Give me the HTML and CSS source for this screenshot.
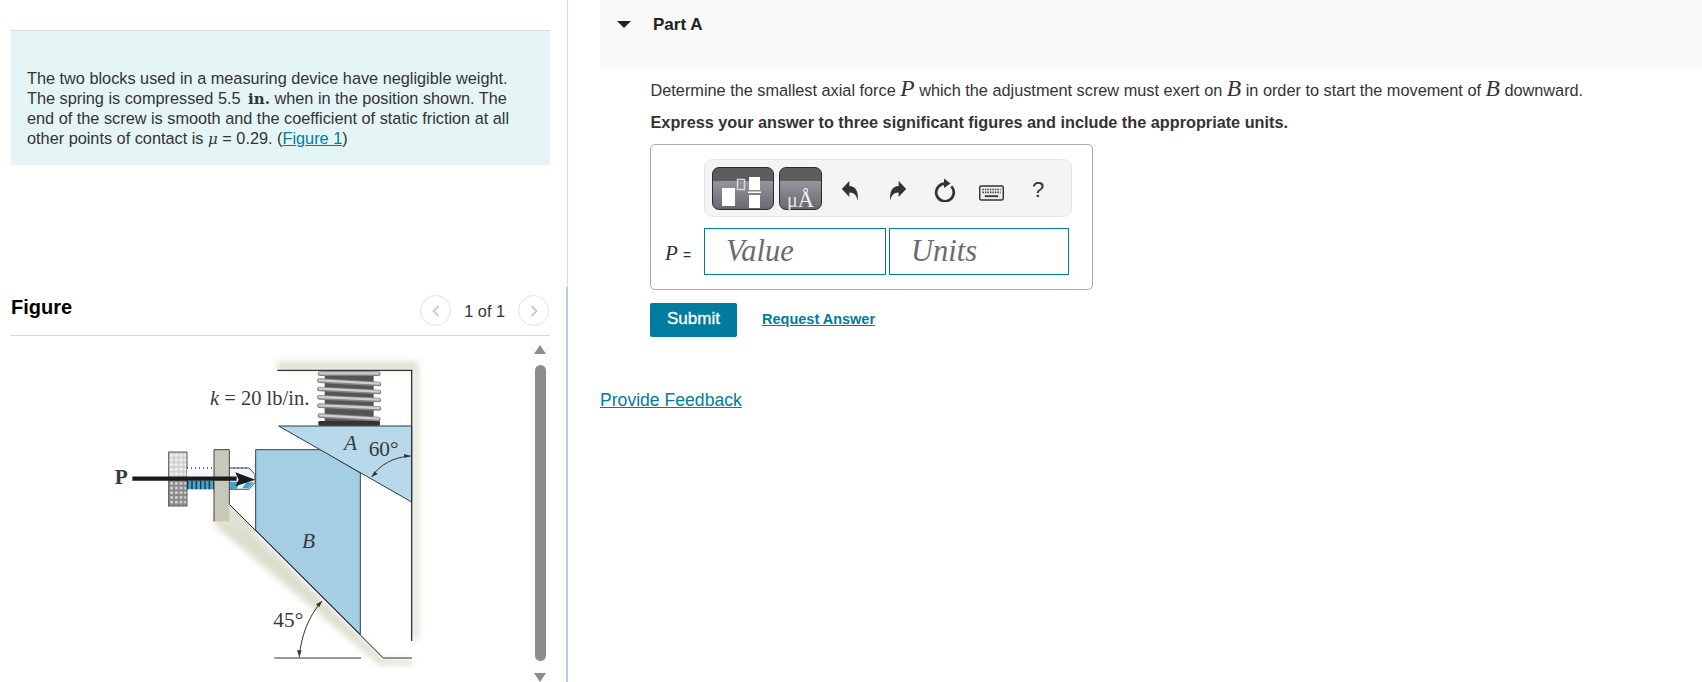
FILE: index.html
```html
<!DOCTYPE html>
<html lang="en">
<head>
<meta charset="utf-8">
<title>Part A</title>
<link rel="stylesheet" href="styles.css">
</head>
<body>
<div class="page">
  <aside class="left">
    <section class="intro">
      <p>The two blocks used in a measuring device have negligible weight. The spring is compressed 5.5 <b class="math-b">in.</b> when in the position shown. The end of the screw is smooth and the coefficient of static friction at all other points of contact is <i class="math">μ</i> = 0.29. (<a href="#">Figure 1</a>)</p>
    </section>
    <header class="fig-head">
      <h2>Figure</h2>
      <div class="pager">
        <span class="circle"><svg viewBox="0 0 12 16" width="10" height="14"><path d="M9 2 L3 8 L9 14" fill="none" stroke="#c4c4c4" stroke-width="2"/></svg></span>
        <span class="count">1 of 1</span>
        <span class="circle"><svg viewBox="0 0 12 16" width="10" height="14"><path d="M3 2 L9 8 L3 14" fill="none" stroke="#c4c4c4" stroke-width="2"/></svg></span>
      </div>
    </header>
    <div class="fig-body">
      <svg class="diagram" viewBox="0 0 1440 1026" width="480" height="342">
        <defs>
          <filter id="soft" x="-20%" y="-20%" width="140%" height="140%"><feGaussianBlur stdDeviation="9"/></filter>
          <pattern id="knurl" width="14" height="14" patternUnits="userSpaceOnUse"><rect width="14" height="14" fill="#d0d0d0"/><circle cx="7" cy="7" r="5" fill="#f0f0f0"/></pattern>
          <pattern id="knurl2" width="14" height="14" patternUnits="userSpaceOnUse"><rect width="14" height="14" fill="#8a8a8a"/><circle cx="7" cy="7" r="4.5" fill="#d8d8d8"/></pattern>
        </defs>
        <g filter="url(#soft)" fill="#dedecf">
          <path d="M562 62 H985 V895 H968 V88 H562 Z"/>
          <path d="M372 530 L420 500 L880 955 H965 V972 H870 L372 552 Z"/>
        </g>
        <path d="M372 500 L418 490 L497 567 V575 L372 541 Z" fill="#e2e1d6"/>
        <path d="M418 490 L880 951" fill="none" stroke="#222" stroke-width="3"/>
        <path d="M497 326 H693 L811 396 V880 L497 567 Z" fill="#a3cee4" stroke="#33434d" stroke-width="3"/>
        <path d="M566 255 H965 V483 Z" fill="#b7d9ea" stroke="#2d3a42" stroke-width="3"/>
        <path d="M562 88 H965 V900" fill="none" stroke="#333" stroke-width="4"/>
        <path d="M880 951 H966 M553 951 H813" stroke="#333" stroke-width="3" fill="none"/>
        <g class="spring">
          <rect x="704" y="92" width="147" height="160" fill="#555"/>
          <rect x="685" y="240" width="185" height="14" rx="4" fill="#333"/>
          <path d="M690 98 H865 M688 119 L867 129 M688 144 L867 153 M688 169 L867 177 M688 194 L867 202 M690 224 L865 234" stroke="#858585" stroke-width="14" stroke-linecap="round" fill="none"/>
          <path d="M690 97 H865 M688 118 L867 128 M688 143 L867 152 M688 168 L867 176 M688 193 L867 201 M690 223 L865 233" stroke="#cfcfcf" stroke-width="7" stroke-linecap="round" fill="none"/>
        </g>
        <text class="fig-text label" x="360" y="192"><tspan font-style="italic">k</tspan> = 20 lb/in.</text>
        <text class="fig-text it" x="762" y="326">A</text>
        <text class="fig-text" x="836" y="345">60°</text>
        <text class="fig-text it" x="636" y="622">B</text>
        <text class="fig-text" x="550" y="858">45°</text>
        <text class="fig-text bold" x="74" y="430">P</text>
        <path d="M845 408 C868 372 910 348 962 345" fill="none" stroke="#333" stroke-width="3"/>
        <path d="M962 345 L942 339 L943 351 Z M845 408 L863 399 L853 391 Z" fill="#333"/>
        <path d="M628 948 C632 890 655 825 696 780" fill="none" stroke="#333" stroke-width="3"/>
        <path d="M628 948 L621 928 L635 928 Z M696 780 L678 790 L688 799 Z" fill="#333"/>
        <rect x="236" y="333" width="55" height="81" fill="url(#knurl)"/>
        <rect x="236" y="414" width="55" height="81" fill="url(#knurl2)"/>
        <rect x="236" y="333" width="55" height="162" fill="none" stroke="#555" stroke-width="3"/>
        <rect x="291" y="381" width="81" height="32" fill="#f4f8fa"/>
        <rect x="291" y="419" width="81" height="26" fill="#3fa7cf"/>
        <path d="M291 381 H372" stroke="#333" stroke-width="5" stroke-dasharray="3 9"/>
        <path d="M291 432 H372" stroke="#22323a" stroke-width="26" stroke-dasharray="4 9"/>
        <path d="M418 381 H477 L495 400 V425 L477 445 H418" fill="#eef5f8" stroke="#555" stroke-width="3"/>
        <path d="M418 381 H470" stroke="#333" stroke-width="5" stroke-dasharray="3 9"/>
        <path d="M418 422 H450 L440 444 H418 Z M470 424 H492 L476 442 H456 Z" fill="#3fa7cf"/>
        <rect x="372" y="326" width="46" height="215" fill="#c9c8b8"/>
        <path d="M372 541 V326 H418 V490" fill="none" stroke="#444" stroke-width="3"/>
        <path d="M127 413 H440" stroke="#1a1a1a" stroke-width="13"/>
        <path d="M436 394 L496 416 L436 436 L446 416 Z" fill="#1a1a1a"/>
      </svg>
      <div class="scroll">
        <span class="arrow up"></span>
        <span class="thumb"></span>
        <span class="arrow down"></span>
      </div>
    </div>
  </aside>
  <main class="right">
    <header class="part-head">
      <span class="caret"></span>
      <h3>Part A</h3>
    </header>
    <div class="part-body">
      <p class="q">Determine the smallest axial force <i class="mvar">P</i> which the adjustment screw must exert on <i class="mvar">B</i> in order to start the movement of <i class="mvar">B</i> downward.</p>
      <p class="q strong">Express your answer to three significant figures and include the appropriate units.</p>
      <div class="answer">
        <div class="toolbar">
          <button class="tbtn wide" type="button">
            <svg viewBox="0 0 62 43" width="62" height="43">
              <rect x="10" y="21" width="13" height="18" fill="#fff"/>
              <rect x="25.5" y="12.5" width="7" height="10" fill="none" stroke="#d8d8d8" stroke-width="1.5"/>
              <rect x="37" y="10" width="11" height="13" fill="#fff"/>
              <rect x="36" y="24.5" width="13" height="1.5" fill="#fff"/>
              <rect x="37" y="28" width="11" height="13" fill="#fff"/>
            </svg>
          </button>
          <button class="tbtn narrow" type="button">
            <svg class="ua" viewBox="0 0 43 43" width="43" height="43">
              <text x="8" y="40" class="ua-m">μ</text>
              <text x="18.5" y="40" class="ua-a">Å</text>
            </svg>
          </button>
          <svg class="ic ic-undo" viewBox="0 0 24 24" width="20" height="24" preserveAspectRatio="none"><path d="M1 10 L10 2 V7 C17 7 21.5 12 20 22 C19 16.5 16 13.5 10 13.5 V18 Z" fill="#333"/></svg>
          <svg class="ic ic-redo" viewBox="0 0 24 24" width="20" height="24" preserveAspectRatio="none"><path d="M23 10 L14 2 V7 C7 7 2.5 12 4 22 C5 16.5 8 13.5 14 13.5 V18 Z" fill="#333"/></svg>
          <svg class="ic ic-reset" viewBox="0 0 24 24" width="24" height="24"><path d="M12 5.7 A8.8 8.8 0 1 0 18.3 8.4" fill="none" stroke="#333" stroke-width="2.7"/><path d="M11 .5 L17.5 5.5 L11 10 Z" fill="#333"/></svg>
          <svg class="ic ic-kbd" viewBox="0 0 26 16" width="25" height="16">
            <rect x=".75" y=".75" width="24.5" height="14.5" rx="1.5" fill="#ececec" stroke="#333" stroke-width="1.5"/>
            <path d="M3.5 4.3 H22.5 M3.5 7.3 H22.5" stroke="#444" stroke-width="1.7" stroke-dasharray="1.6 1"/>
            <path d="M6 11.3 H20" stroke="#333" stroke-width="1.9"/>
          </svg>
          <span class="help">?</span>
        </div>
        <div class="fields">
          <span class="plabel"><i>P</i> <small>=</small></span>
          <input class="field f-value" type="text" placeholder="Value">
          <input class="field f-units" type="text" placeholder="Units">
        </div>
      </div>
      <div class="actions">
        <button class="submit" type="button">Submit</button>
        <a class="request" href="#">Request Answer</a>
      </div>
    </div>
    <a class="feedback" href="#">Provide Feedback</a>
  </main>
</div>
</body>
</html>
```
FILE: styles.css
```css
* { box-sizing: border-box; }
html, body { margin: 0; height: 100%; overflow: hidden; background: #fff; }
body { font-family: "Liberation Sans", Arial, sans-serif; color: #333; font-size: 16px; }
a { color: #007c9e; }
p, h2, h3 { margin: 0; }
.page { display: flex; height: 682px; width: 1702px; }

.left { position: relative; width: 568px; flex: none; padding: 30px 17px 0 11px; border-right: 1px solid #d3dee8; }
.left::after { content: ""; position: absolute; right: -1px; top: 287px; bottom: 0; width: 2px; background: #b8cfe3; }
.intro { height: 135px; background: #e5f5f6; border-top: 1px solid #d6dfe0; padding: 37px 16px 0; }
.intro p { font-size: 16.3px; line-height: 20px; width: 490px; }
.math-b { font-family: "DejaVu Serif", serif; font-size: 15px; margin-left: 3px; line-height: 1; }
.math { font-family: "DejaVu Serif", serif; font-size: 15px; line-height: 1; }

.fig-head { display: flex; align-items: center; justify-content: space-between; margin-top: 129px; height: 42px; border-bottom: 1px solid #d6d6d6; padding-bottom: 8px; }
.fig-head h2 { font-size: 20px; color: #000; line-height: 24px; margin-top: -8px; }
.pager { display: flex; align-items: center; gap: 13px; padding-right: 1px; }
.circle { width: 31px; height: 31px; border: 1px solid #e2e2e2; border-radius: 50%; display: flex; align-items: center; justify-content: center; }
.count { font-size: 16.3px; color: #333; padding-top: 2px; }

.fig-body { display: flex; margin-left: -1px; height: 346px; padding-top: 5px; }
.diagram { margin-left: 80px; flex: none; display: block; }
.fig-text { font-family: "Liberation Serif", serif; font-size: 64px; fill: #3a3a3a; }
.fig-text.label { font-size: 61.5px; }
.fig-text.it { font-style: italic; }
.fig-text.bold { font-weight: bold; }
.scroll { position: relative; width: 20px; margin-left: -40px; margin-top: 1px; display: flex; flex-direction: column; align-items: center; background: #fdfdfd; height: 340px; z-index: 1; }
.thumb { width: 11px; height: 296px; background: #8c8c8c; border-radius: 6px; margin-top: 11px; margin-bottom: 12px; }
.arrow { width: 0; height: 0; border-left: 6.5px solid transparent; border-right: 6.5px solid transparent; }
.arrow.up { border-bottom: 9px solid #8c8c8c; margin-top: 3px; }
.arrow.down { border-top: 9px solid #8c8c8c; }

.right { flex: 1; padding: 0 0 0 32px; }
.part-head { height: 67px; background: #f9f9f9; display: flex; align-items: flex-start; padding: 16px 0 0 17px; }
.caret { width: 0; height: 0; border-left: 7px solid transparent; border-right: 7px solid transparent; border-top: 7px solid #222; margin-top: 5px; }
.part-head h3 { font-size: 17px; line-height: 18px; margin-left: 22px; color: #222; }
.part-body { padding: 13px 0 0 50px; }
.q { font-size: 16.3px; line-height: 20px; margin-left: .5px; }
.q + .q { margin-top: 12px; }
.strong { font-weight: bold; font-size: 16.25px; }
.mvar { font-family: "Liberation Serif", serif; font-size: 23.5px; line-height: 16px; }
.answer { width: 443px; height: 146px; margin-top: 12px; border: 1px solid #aaa; border-radius: 5px; padding: 14px 20px 0 53px; }
.toolbar { width: 368px; height: 58px; background: #f4f4f4; border: 1px solid #e4e4e4; border-radius: 9px; display: flex; align-items: center; padding-left: 7px; }
.tbtn { padding: 0; height: 43px; border: 1px solid #2c2c2c; border-radius: 7px; display: block; background: linear-gradient(#5d5d5d 0 32%, #96959f 33%, #68686e 100%); }
.tbtn svg { display: block; margin: -1px; }
.tbtn .ua { overflow: visible; }
.tbtn.wide { width: 62px; }
.tbtn.narrow { width: 43px; margin-left: 5px; }
.ua-m { font-family: "Liberation Serif", serif; font-size: 20px; fill: #e8e8e8; }
.ua-a { font-family: "Liberation Serif", serif; font-size: 23px; fill: #f0f0f0; }
.ic { display: block; flex: none; }
.ic-undo { margin-left: 19px; margin-top: 6px; }
.ic-redo { margin-left: 26px; margin-top: 6px; }
.ic-reset { margin-left: 26px; margin-top: 3px; }
.ic-kbd { margin-left: 22px; margin-top: 10px; }
.help { margin-left: 28px; font-size: 22px; color: #333; padding-top: 4px; }
.fields { display: flex; align-items: center; margin-top: 11px; margin-left: -36px; }
.plabel { width: 39px; margin-left: -3px; font-family: "Liberation Serif", serif; font-size: 21px; white-space: nowrap; padding-top: 3px; }
.plabel small { font-family: "Liberation Sans", sans-serif; font-size: 14px; }
.field { height: 47px; border: 1px solid #007c9e; border-radius: 0; background: #fff; font-family: "Liberation Serif", serif; font-style: italic; font-size: 30.5px; padding: 0 0 0 21px; outline: none; }
.field::placeholder { color: #6b6b6b; opacity: 1; font-style: italic; }
.f-value { width: 182px; margin-right: 3px; }
.f-units { width: 180px; }
.actions { display: flex; align-items: center; margin-top: 13px; }
.submit { width: 87px; height: 34px; background: #007c9e; border: 0; border-radius: 2px; color: #fff; font-family: "Liberation Sans", sans-serif; font-size: 17px; padding: 0 0 2px; -webkit-text-stroke: .3px #fff; }
.request { margin-left: 25px; margin-top: -2px; font-size: 14.5px; font-weight: bold; }
.feedback { display: inline-block; margin-top: 53px; font-size: 17.6px; line-height: 20px; }
```
